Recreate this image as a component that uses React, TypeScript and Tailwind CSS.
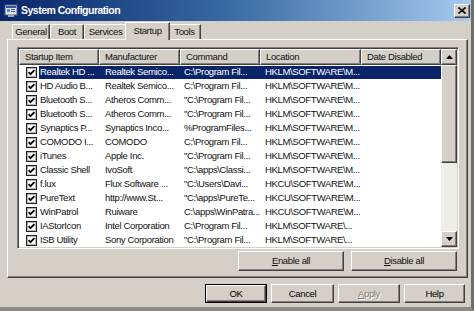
import React from "react";

type Row = { item: string; mfr: string; cmd: string; loc: string };

const rows: Row[] = [
  { item: "Realtek HD ...", mfr: "Realtek Semico...", cmd: "C:\\Program Fil...", loc: "HKLM\\SOFTWARE\\M..." },
  { item: "HD Audio B...", mfr: "Realtek Semico...", cmd: "C:\\Program Fil...", loc: "HKLM\\SOFTWARE\\M..." },
  { item: "Bluetooth S...", mfr: "Atheros Comm...", cmd: "\"C:\\Program Fil...", loc: "HKLM\\SOFTWARE\\M..." },
  { item: "Bluetooth S...", mfr: "Atheros Comm...", cmd: "\"C:\\Program Fil...", loc: "HKLM\\SOFTWARE\\M..." },
  { item: "Synaptics P...", mfr: "Synaptics Inco...", cmd: "%ProgramFiles...", loc: "HKLM\\SOFTWARE\\M..." },
  { item: "COMODO I...", mfr: "COMODO", cmd: "C:\\Program Fil...", loc: "HKLM\\SOFTWARE\\M..." },
  { item: "iTunes", mfr: "Apple Inc.", cmd: "\"C:\\Program Fil...", loc: "HKLM\\SOFTWARE\\M..." },
  { item: "Classic Shell", mfr: "IvoSoft", cmd: "\"C:\\apps\\Classi...", loc: "HKLM\\SOFTWARE\\M..." },
  { item: "f.lux", mfr: "Flux Software ...", cmd: "\"C:\\Users\\Davi...", loc: "HKCU\\SOFTWARE\\M..." },
  { item: "PureText", mfr: "http://www.St...", cmd: "\"C:\\apps\\PureTe...", loc: "HKCU\\SOFTWARE\\M..." },
  { item: "WinPatrol", mfr: "Ruiware", cmd: "C:\\apps\\WinPatra...", loc: "HKCU\\SOFTWARE\\M..." },
  { item: "IAStorIcon", mfr: "Intel Corporation", cmd: "C:\\Program Fil...", loc: "HKLM\\SOFTWARE\\..." },
  { item: "ISB Utility", mfr: "Sony Corporation", cmd: "\"C:\\Program Fil...", loc: "HKLM\\SOFTWARE\\..." },
];

const raised =
  "border border-t-white border-l-white border-r-[#404040] border-b-[#404040] shadow-[inset_-1px_-1px_0_#808080]";

function CheckBox() {
  return (
    <svg width="11" height="11" viewBox="0 0 11 11" className="shrink-0">
      <rect x="0.5" y="0.5" width="10" height="10" fill="white" stroke="#222" strokeWidth="1" />
      <rect x="1.5" y="1.5" width="8" height="8" fill="none" stroke="#888" strokeWidth="0.6" />
      <path d="M2.6 5.2 L4.5 7.2 L8.4 3.1" fill="none" stroke="#000" strokeWidth="1.7" />
    </svg>
  );
}

function Arrow({ up }: { up?: boolean }) {
  return (
    <svg width="7" height="4" viewBox="0 0 7 4">
      {up ? <path d="M0 4 L3.5 0 L7 4 Z" fill="#000" /> : <path d="M0 0 L7 0 L3.5 4 Z" fill="#000" />}
    </svg>
  );
}

function Btn({ children, w, def, disabled }: { children: React.ReactNode; w: string; def?: boolean; disabled?: boolean }) {
  const inner = (
    <div
      className={`${raised} flex items-center justify-center h-full w-full ${
        disabled ? "text-[#808080] [text-shadow:1px_1px_0_#fff]" : "text-black"
      }`}
    >
      {children}
    </div>
  );
  if (def) {
    return <div className={`${w} h-[19px] border border-black`}>{inner}</div>;
  }
  return <div className={`${w} h-[19px]`}>{inner}</div>;
}

function Tab({ label, w, selected }: { label: string; w: string; selected?: boolean }) {
  if (selected) {
    return (
      <div
        className={`${w} h-[18px] -mx-[2px] relative z-10 bg-[#d4d0c8] border-t border-l border-t-white border-l-white border-r border-r-[#404040] shadow-[inset_-1px_0_0_#808080] flex items-start justify-center pt-[3px] mb-[-1px] whitespace-nowrap`}
      >
        {label}
      </div>
    );
  }
  return (
    <div
      className={`${w} h-[15px] border-t border-l border-t-white border-l-white border-r border-r-[#404040] shadow-[inset_-1px_0_0_#808080] flex items-start justify-center pt-[2px] whitespace-nowrap`}
    >
      {label}
    </div>
  );
}

export default function App() {
  const colW = ["w-[80px]", "w-[81px]", "w-[80px]", "w-[101px]", "w-[80px]"];
  const heads = ["Startup Item", "Manufacturer", "Command", "Location", "Date Disabled"];
  return (
    <div className="w-[474px] h-[311px] bg-[#d4d0c8] flex flex-col overflow-hidden text-[9.5px] tracking-[-0.35px] leading-none text-[#111] font-['Liberation_Sans',Arial,sans-serif] border-r-[3px] border-r-[#6f6d68] border-b-[4px] border-b-[#8c8a84]">
      {/* title bar */}
      <div className="h-[21px] shrink-0 flex items-center pl-[4px] pr-[1px] bg-gradient-to-r from-[#0a246a] via-[#3a6ea5] to-[#a6caf0]">
        <svg width="14" height="14" viewBox="0 0 14 14" className="shrink-0">
          <rect x="1" y="1" width="12" height="10" fill="#dfe6ef" stroke="#4a5a78" />
          <rect x="2" y="2" width="10" height="2" fill="#2d56a8" />
          <rect x="3" y="5" width="3" height="3" fill="#6b86c4" />
          <rect x="7" y="5" width="4" height="1" fill="#556" />
          <rect x="7" y="7" width="4" height="1" fill="#556" />
          <rect x="4" y="11" width="6" height="2" fill="#9aa6ba" />
        </svg>
        <span className="ml-[3px] text-white font-bold text-[10.5px] tracking-[-0.5px]">System Configuration</span>
        <div className="flex-1" />
        <div className={`${raised} w-[16px] h-[14px] bg-[#d4d0c8] flex items-center justify-center`}>
          <svg width="8" height="7" viewBox="0 0 8 7">
            <path d="M0.5 0.5 L7.5 6.5 M7.5 0.5 L0.5 6.5" stroke="#000" strokeWidth="1.6" />
          </svg>
        </div>
      </div>

      <div className="pl-[7px] pr-[3px] flex flex-col">
        {/* tabs */}
        <div className="h-[18px] flex items-end pl-[5px]">
          <Tab label="General" w="w-[38px]" />
          <Tab label="Boot" w="w-[34px]" />
          <Tab label="Services" w="w-[43px]" />
          <Tab label="Startup" w="w-[45px]" selected />
          <Tab label="Tools" w="w-[33px]" />
        </div>

        {/* panel */}
        <div className="h-[239px] border border-t-white border-l-white border-r-[#404040] border-b-[#404040] shadow-[inset_-1px_-1px_0_#808080] pt-[7px] pl-[9px] pr-[9px] flex flex-col">
          {/* list */}
          <div className="h-[202px] w-[442px] border border-t-[#808080] border-l-[#808080] border-r-white border-b-white shadow-[inset_1px_1px_0_#404040,inset_-1px_-1px_0_#d4d0c8] p-[1px] bg-white flex">
            <div className="w-[422px] flex flex-col">
              <div className="h-[16px] flex shrink-0">
                {heads.map((h, i) => (
                  <div key={h} className={`${colW[i]} ${raised} bg-[#d4d0c8] flex items-center pl-[5px] whitespace-nowrap overflow-hidden`}>
                    {h}
                  </div>
                ))}
              </div>
              {rows.map((r, i) => {
                const sel = i === 0;
                return (
                  <div key={i} className="h-[14px] flex items-center whitespace-nowrap">
                    <div className="w-[20px] pl-[7px] flex items-center shrink-0">
                      <CheckBox />
                    </div>
                    <div className={`flex items-center h-[13px] ${sel ? "bg-[#0a246a] text-white" : ""}`}>
                      <div className="w-[60px] pl-[1px] overflow-hidden">{r.item}</div>
                      <div className="w-[81px] pl-[6px] overflow-hidden">{r.mfr}</div>
                      <div className="w-[80px] pl-[4px] overflow-hidden">{r.cmd}</div>
                      <div className="w-[101px] pl-[5px] overflow-hidden">{r.loc}</div>
                      <div className="w-[80px]" />
                    </div>
                  </div>
                );
              })}
            </div>
            {/* scrollbar */}
            <div className="w-[16px] flex flex-col bg-[#eeede8]">
              <div className={`${raised} h-[16px] bg-[#d4d0c8] flex items-center justify-center`}>
                <Arrow up />
              </div>
              <div className={`${raised} h-[98px] bg-[#d4d0c8]`} />
              <div className="flex-1" />
              <div className={`${raised} h-[16px] bg-[#d4d0c8] flex items-center justify-center`}>
                <Arrow />
              </div>
            </div>
          </div>
          {/* enable / disable */}
          <div className="flex justify-end gap-[7px] mt-[2px] pr-[1px]">
            <div className={`${raised} w-[106px] h-[20px] flex items-center justify-center`}>
              <span>
                <span className="underline underline-offset-1">E</span>nable all
              </span>
            </div>
            <div className={`${raised} w-[106px] h-[20px] flex items-center justify-center`}>
              <span>
                <span className="underline underline-offset-1">D</span>isable all
              </span>
            </div>
          </div>
        </div>

        {/* footer buttons */}
        <div className="flex justify-end gap-[4px] mt-[6px] pr-[3px]">
          <Btn w="w-[62px]" def>
            OK
          </Btn>
          <Btn w="w-[63px]">Cancel</Btn>
          <Btn w="w-[62px]" disabled>
            <span>
              <span className="underline underline-offset-1">A</span>pply
            </span>
          </Btn>
          <Btn w="w-[61px]">Help</Btn>
        </div>
      </div>
    </div>
  );
}
